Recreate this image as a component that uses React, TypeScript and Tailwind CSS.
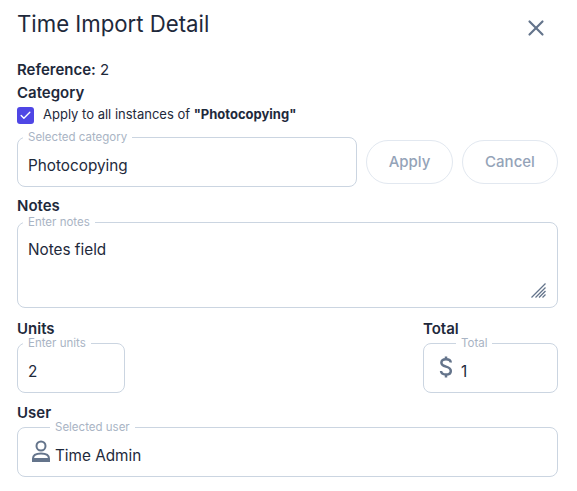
import { Check, X } from 'lucide-react';
import type { ReactNode } from 'react';

const FieldBox = ({ legend, legendLeft, className, children }: { legend: string; legendLeft: string; className: string; children: ReactNode }) => (
    <fieldset className={`border border-[#cbd5e1] rounded-lg ${className}`}>
        <legend className={`${legendLeft} px-[5px] text-[11.5px] leading-[14px] text-[#a9b4c4]`}>{legend}</legend>
        {children}
    </fieldset>
);

const Label = ({ children }: { children: ReactNode }) => (
    <div className="text-[15px] leading-[20px] font-semibold text-[#1e293b]">{children}</div>
);

const App = () => {
    return (
        <div className="w-[577px] h-[491px] bg-white px-[17px] overflow-hidden text-[#1e293b] font-['Inter',sans-serif]">
            <div className="flex justify-between items-start h-[60px]">
                <h2 className="mt-[9px] text-[22.2px] leading-[30px] font-normal">Time Import Detail</h2>
                <button className="mt-[15px] mr-[11px] text-[#64748b]">
                    <X className="w-[26px] h-[26px]" strokeWidth={2} />
                </button>
            </div>

            <div className="text-[15px] leading-[20px]"><span className="font-semibold">Reference:</span> 2</div>
            <div className="mt-[3px]"><Label>Category</Label></div>
            <div className="flex items-center gap-[9px] mt-[3px] h-[18px]">
                <span className="w-[17px] h-[17px] rounded-[3px] bg-[#4f46e5] flex items-center justify-center">
                    <Check className="w-[13px] h-[13px] text-white" strokeWidth={2.5} />
                </span>
                <span className="text-[13px]">Apply to all instances of <b className="font-bold">"Photocopying"</b></span>
            </div>

            <div className="flex items-start mt-[6px]">
                <FieldBox legend="Selected category" legendLeft="ml-0" className="w-[340px] h-[57px] px-[5px]">
                    <div className="pl-[5px] mt-[10px] text-[15.3px] leading-[24px]">Photocopying</div>
                </FieldBox>
                <button className="ml-[9px] mt-[10px] w-[87px] h-[44px] rounded-full border border-[#e2e8f0] text-[15px] font-medium text-[#94a3b8]">Apply</button>
                <button className="ml-[9px] mt-[10px] w-[96px] h-[44px] rounded-full border border-[#e2e8f0] text-[15px] font-medium text-[#94a3b8]">Cancel</button>
            </div>

            <div className="mt-[9px]"><Label>Notes</Label></div>
            <FieldBox legend="Enter notes" legendLeft="ml-0" className="relative w-[541px] h-[93px] px-[5px] -mt-[1px]">
                <div className="pl-[5px] mt-[9px] text-[15.3px] leading-[24px]">Notes field</div>
                <svg className="absolute right-[11px] bottom-[9px] w-[15px] h-[15px] text-[#64748b]" viewBox="0 0 15 15" fill="none" stroke="currentColor" strokeWidth="1.3">
                    <path d="M0.5 14.5 14.5 0.5M4.5 14.5 14.5 4.5M8 14.5 14.5 8M11.5 14.5 14.5 11.5" />
                </svg>
            </FieldBox>

            <div className="flex justify-between w-[541px] mt-[11px]">
                <div>
                    <Label>Units</Label>
                    <FieldBox legend="Enter units" legendLeft="ml-0" className="w-[108px] h-[57px] px-[5px] -mt-[3px]">
                        <div className="pl-[5px] mt-[10px] text-[15.3px] leading-[24px]">2</div>
                    </FieldBox>
                </div>
                <div>
                    <Label>Total</Label>
                    <FieldBox legend="Total" legendLeft="ml-[27px]" className="w-[135px] h-[57px] px-[5px] -mt-[3px]">
                        <div className="flex items-start mt-[6px] pl-[10px]">
                            <svg className="w-[14px] h-[22px] text-[#64748b]" viewBox="0 0 14 22" fill="none" stroke="currentColor" strokeWidth="2.5">
                                <path d="M11.8 6.5C11.6 4.4 9.8 3.2 7 3.2 4.100 3.200 2.400 4.600 2.400 6.700 2.400 8.900 4.300 9.800 7 10.600 9.800 11.400 11.800 12.400 11.800 14.900 11.800 17.100 9.900 18.500 7 18.500 4.100 18.500 2.200 17.200 2 15" />
                                <path d="M7 0.500V3.200M7 18.500V21.500" />
                            </svg>
                            <span className="ml-[8px] mt-[4px] text-[15.3px] leading-[24px]">1</span>
                        </div>
                    </FieldBox>
                </div>
            </div>

            <div className="mt-[10px]"><Label>User</Label></div>
            <FieldBox legend="Selected user" legendLeft="ml-[27px]" className="w-[541px] h-[57px] px-[5px] -mt-[3px]">
                <div className="flex items-start mt-[6px] pl-[9px]">
                    <svg className="w-[18px] h-[22px] text-[#64748b]" viewBox="0 0 18 22" fill="none" stroke="currentColor" strokeWidth="2">
                        <circle cx="9" cy="6" r="4.500" />
                        <path d="M1 21V18.500C1 15.500 4 13.500 9 13.500 14 13.500 17 15.500 17 18.500V21Z" />
                        <path d="M1 19.500H17" strokeWidth="3" />
                    </svg>
                    <span className="ml-[5px] mt-[4px] text-[15.3px] leading-[24px]">Time Admin</span>
                </div>
            </FieldBox>
        </div>
    );
};

export default App;
